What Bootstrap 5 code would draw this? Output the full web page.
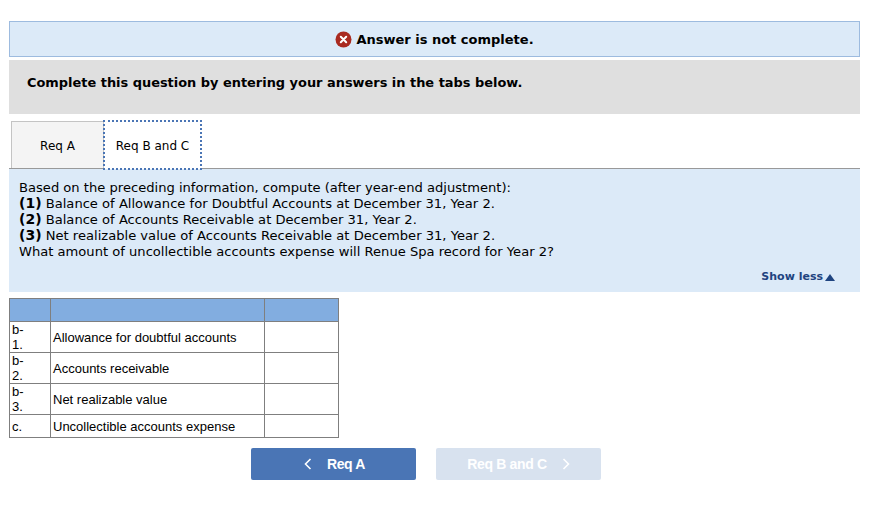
<!DOCTYPE html>
<html lang="en">
<head>
<meta charset="utf-8">
<title>Answer is not complete</title>
<link href="https://cdn.jsdelivr.net/npm/bootstrap@5.3.0/dist/css/bootstrap.min.css" rel="stylesheet">
<style>
body { background:#fff; color:#000; font-family:"DejaVu Sans",Verdana,sans-serif; font-size:13px; line-height:16px; }
.page-wrap { padding:21px 36px 0 9px; }
.status-bar { height:36px; padding-top:1px; background:#dceaf8; border:1px solid #9dbbdf; font-weight:700; font-size:13px; }
.status-icon { width:17px; height:17px; margin-right:4px; }
.prompt-bar { height:54px; margin-top:3px; background:#dfdfdf; padding:14px 18px; font-weight:700; font-size:12.93px; line-height:18px; }
.tab-strip { margin-top:7px; height:48px; padding-left:2px; border-bottom:1px solid #999; }
.tab-item { height:47px; padding-top:2px; font-size:12px; border:1px solid #c4c4c4; border-bottom:0; }
.tab-off { width:93px; background:#f4f4f4; }
.tab-on { width:97px; background:#fff; outline:2px dotted #4a75b5; outline-offset:-1px; height:48px; border:0; padding-top:2px; }
.info-panel { height:123px; background:#dceaf8; padding:11px 25px 7px 10px; font-size:13.1px; }
.info-panel b { font-size:14px; line-height:0; }
.more-link { color:#1f4480; font-weight:700; font-size:11px; text-decoration:none; gap:2px; }
.more-link svg { width:10px; height:7px; }
.answer-grid { margin-top:6px; width:329px; table-layout:fixed; border-collapse:collapse; font-family:"Liberation Sans",Arial,sans-serif; font-size:13px; line-height:15px; }
.answer-grid td, .answer-grid th { border:1px solid #7f7f7f; padding:0 2px; vertical-align:middle; }
.answer-grid th { background:#82ade0; height:23px; }
.answer-grid .row-tall { height:31px; }
.answer-grid .row-short { height:23px; }
.pager { margin-top:10px; padding-left:242px; gap:20px; }
.pager-btn { width:165px; height:32px; border-radius:2px; color:#fff; font-family:"Liberation Sans",Arial,sans-serif; font-weight:700; font-size:14px; letter-spacing:-.35px; gap:15px; }
.pager-prev { background:#4a75b5; padding-left:2px; }
.pager-next { background:#d8e2ef; }
.pager-btn svg { width:8px; height:12px; }
</style>
</head>
<body>
<div class="page-wrap">
  <div class="status-bar d-flex align-items-center justify-content-center">
    <svg class="status-icon" viewBox="0 0 17 17" aria-hidden="true"><circle cx="8.5" cy="8.5" r="8" fill="#a92a20"/><path d="M5.8 5.8l5.4 5.4M11.2 5.8l-5.4 5.4" stroke="#fff" stroke-width="2" stroke-linecap="round"/></svg>
    <span>Answer is not complete.</span>
  </div>
  <div class="prompt-bar">Complete this question by entering your answers in the tabs below.</div>
  <div class="tab-strip d-flex">
    <div class="tab-item tab-off d-flex align-items-center justify-content-center">Req A</div>
    <div class="tab-item tab-on d-flex align-items-center justify-content-center">Req B and C</div>
  </div>
  <div class="info-panel d-flex flex-column">
    <div>Based on the preceding information, compute (after year-end adjustment):<br>
    <b>(1)</b> Balance of Allowance for Doubtful Accounts at December 31, Year 2.<br>
    <b>(2)</b> Balance of Accounts Receivable at December 31, Year 2.<br>
    <b>(3)</b> Net realizable value of Accounts Receivable at December 31, Year 2.<br>
    What amount of uncollectible accounts expense will Renue Spa record for Year 2?</div>
    <a href="#" class="more-link d-flex align-items-center mt-auto ms-auto">Show less<svg viewBox="0 0 10 7" aria-hidden="true"><path d="M5 0l5 7H0z" fill="#1f4480"/></svg></a>
  </div>
  <table class="answer-grid">
    <colgroup><col style="width:41px"><col style="width:214px"><col style="width:74px"></colgroup>
    <thead><tr><th></th><th></th><th></th></tr></thead>
    <tbody>
      <tr class="row-tall"><td>b-<br>1.</td><td>Allowance for doubtful accounts</td><td></td></tr>
      <tr class="row-tall"><td>b-<br>2.</td><td>Accounts receivable</td><td></td></tr>
      <tr class="row-tall"><td>b-<br>3.</td><td>Net realizable value</td><td></td></tr>
      <tr class="row-short"><td>c.</td><td>Uncollectible accounts expense</td><td></td></tr>
    </tbody>
  </table>
  <div class="pager d-flex">
    <div class="pager-btn pager-prev d-flex align-items-center justify-content-center">
      <svg viewBox="0 0 8 12" aria-hidden="true"><path d="M6.5 1L1.5 6l5 5" fill="none" stroke="#fff" stroke-width="1.6"/></svg><span>Req A</span>
    </div>
    <div class="pager-btn pager-next d-flex align-items-center justify-content-center">
      <span>Req B and C</span><svg viewBox="0 0 8 12" aria-hidden="true"><path d="M1.5 1l5 5-5 5" fill="none" stroke="#fff" stroke-width="1.6"/></svg>
    </div>
  </div>
</div>
</body>
</html>
